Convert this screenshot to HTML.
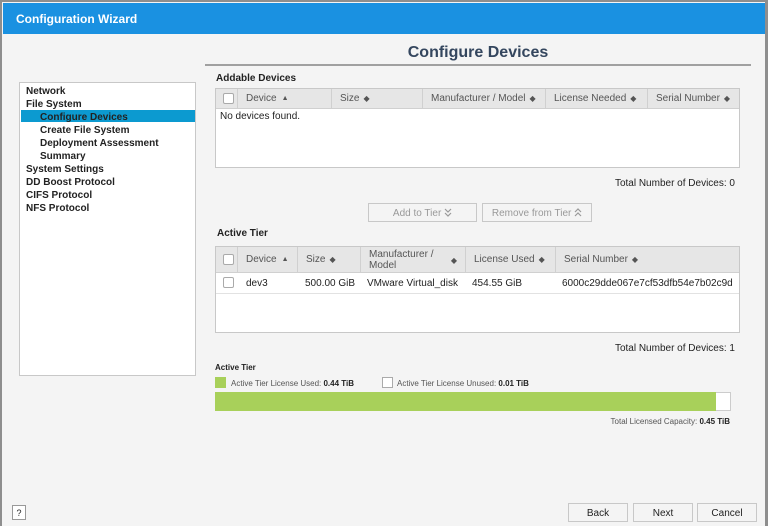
<!DOCTYPE html>
<html><head><style>
*{box-sizing:border-box;margin:0;padding:0}
body{width:768px;height:526px;background:#8e8e8e;font-family:"Liberation Sans",sans-serif;position:relative;overflow:hidden;font-size:10px;color:#222}
.a{position:absolute}
#win{left:2px;top:2px;width:763px;height:524px;background:#f4f4f4}
#title{left:3px;top:3px;width:762px;height:31px;background:#1a91e1;color:#fff;font-weight:bold;font-size:12px;padding:9px 0 0 13px}
.nav{left:19px;top:82px;width:177px;height:294px;background:#fff;border:1px solid #c8c8c8}
.nav div{position:absolute;left:6px;font-weight:bold;font-size:10px;color:#222;white-space:nowrap}
.tbl{background:#fff;border:1px solid #c8c8c8}
.hd{background:#e6e6e6;border-bottom:1px solid #d0d0d0}
.c{position:absolute;top:0;height:100%;border-left:1px solid #d0d0d0;color:#555;padding-left:8px;display:flex;align-items:center;white-space:nowrap}
.cb{position:absolute;width:11px;height:11px;border:1px solid #aaa;border-radius:2px;background:#fff}
.btn{position:absolute;border:1px solid #c8c8c8;background:#f4f4f4;color:#222;font-size:10px;text-align:center}
.r{text-align:right;white-space:nowrap}
.dm{color:#888;font-size:8px}
</style></head><body>
<div class="a" id="win"></div>
<div class="a" id="title">Configuration Wizard</div>
<div class="a" style="left:205px;top:44px;width:546px;text-align:center;font-size:16px;font-weight:bold;color:#34465e">Configure Devices</div>
<div class="a" style="left:205px;top:64px;width:546px;height:2px;background:#a0a0a0"></div>

<div class="a nav">
<div style="top:3px">Network</div>
<div style="top:16px">File System</div>
<div style="top:27px;left:1px;width:174px;height:12px;background:#0c9ad0"></div>
<div style="top:29px;left:20px">Configure Devices</div>
<div style="top:42px;left:20px">Create File System</div>
<div style="top:55px;left:20px">Deployment Assessment</div>
<div style="top:68px;left:20px">Summary</div>
<div style="top:81px">System Settings</div>
<div style="top:94px">DD Boost Protocol</div>
<div style="top:107px">CIFS Protocol</div>
<div style="top:120px">NFS Protocol</div>
</div>

<div class="a" style="left:216px;top:73px;font-weight:bold">Addable Devices</div>
<div class="a tbl" style="left:215px;top:88px;width:525px;height:80px">
<div class="a hd" style="left:0;top:0;width:523px;height:20px">
<div class="cb" style="left:7px;top:4px"></div>
<div class="c" style="left:21px;width:94px">Device <span style="font-size:7px;margin-left:5px">▲</span></div>
<div class="c" style="left:115px;width:91px">Size <span style="font-size:8px;margin-left:4px">◆</span></div>
<div class="c" style="left:206px;width:123px">Manufacturer / Model <span style="font-size:8px;margin-left:4px">◆</span></div>
<div class="c" style="left:329px;width:102px">License Needed <span style="font-size:8px;margin-left:4px">◆</span></div>
<div class="c" style="left:431px;width:92px">Serial Number <span style="font-size:8px;margin-left:4px">◆</span></div>
</div>
<div class="a" style="left:4px;top:22px">No devices found.</div>
</div>
<div class="a r" style="right:33px;top:178px">Total Number of Devices: 0</div>

<div class="btn" style="left:368px;top:203px;width:109px;height:19px;color:#999;padding-top:4px">Add to Tier <svg width="8" height="9" viewBox="0 0 8 9" style="vertical-align:-1px"><path d="M1 1l3 3 3-3M1 5l3 3 3-3" fill="none" stroke="#999" stroke-width="1.2"/></svg></div>
<div class="btn" style="left:482px;top:203px;width:110px;height:19px;color:#999;padding-top:4px">Remove from Tier <svg width="8" height="9" viewBox="0 0 8 9" style="vertical-align:-1px"><path d="M1 4l3-3 3 3M1 8l3-3 3 3" fill="none" stroke="#999" stroke-width="1.2"/></svg></div>

<div class="a" style="left:217px;top:228px;font-weight:bold">Active Tier</div>
<div class="a tbl" style="left:215px;top:246px;width:525px;height:87px">
<div class="a hd" style="left:0;top:0;width:523px;height:26px">
<div class="cb" style="left:7px;top:7px"></div>
<div class="c" style="left:21px;width:60px">Device <span style="font-size:7px;margin-left:5px">▲</span></div>
<div class="c" style="left:81px;width:63px">Size <span style="font-size:8px;margin-left:4px">◆</span></div>
<div class="c" style="left:144px;width:105px;line-height:11px">Manufacturer /<br>Model<span style="position:absolute;right:8px;top:8px;font-size:8px">◆</span></div>
<div class="c" style="left:249px;width:90px">License Used <span style="font-size:8px;margin-left:4px">◆</span></div>
<div class="c" style="left:339px;width:184px">Serial Number <span style="font-size:8px;margin-left:4px">◆</span></div>
</div>
<div class="cb" style="left:7px;top:30px"></div>
<div class="a" style="left:30px;top:31px">dev3</div>
<div class="a" style="left:89px;top:31px">500.00 GiB</div>
<div class="a" style="left:151px;top:31px">VMware Virtual_disk</div>
<div class="a" style="left:256px;top:31px">454.55 GiB</div>
<div class="a" style="left:346px;top:31px">6000c29dde067e7cf53dfb54e7b02c9d</div>
<div class="a" style="left:0;top:46px;width:523px;height:1px;background:#e2e2e2"></div>
</div>
<div class="a r" style="right:33px;top:343px">Total Number of Devices: 1</div>

<div class="a" style="left:215px;top:363px;font-weight:bold;font-size:8px">Active Tier</div>
<div class="a" style="left:215px;top:377px;width:11px;height:11px;background:#a8d05a"></div>
<div class="a dm" style="left:231px;top:379px;color:#555">Active Tier License Used: <b style="color:#222">0.44 TiB</b></div>
<div class="a" style="left:382px;top:377px;width:11px;height:11px;background:#fff;border:1px solid #aaa"></div>
<div class="a dm" style="left:397px;top:379px;color:#555">Active Tier License Unused: <b style="color:#222">0.01 TiB</b></div>
<div class="a" style="left:215px;top:392px;width:516px;height:19px;background:#fff;border:1px solid #ccc"></div>
<div class="a" style="left:215px;top:392px;width:501px;height:19px;background:#a8d05a"></div>
<div class="a dm r" style="right:38px;top:417px;color:#555">Total Licensed Capacity: <b style="color:#222">0.45 TiB</b></div>

<div class="btn" style="left:12px;top:505px;width:14px;height:15px;background:#fff;font-size:9px;padding-top:2px;border-color:#999">?</div>
<div class="btn" style="left:568px;top:503px;width:60px;height:19px;padding-top:4px">Back</div>
<div class="btn" style="left:633px;top:503px;width:60px;height:19px;padding-top:4px">Next</div>
<div class="btn" style="left:697px;top:503px;width:60px;height:19px;padding-top:4px">Cancel</div>
</body></html>
